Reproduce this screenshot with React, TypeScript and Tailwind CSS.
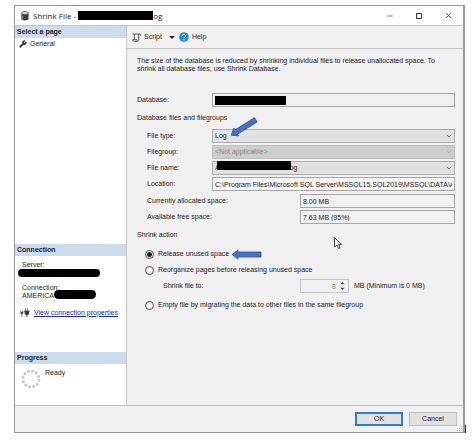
import { useState, type ReactNode } from "react";
import { ChevronDown, Minus, Wrench, X } from "lucide-react";
import clsx from "clsx";

function DatabaseIcon() {
    return (
        <svg viewBox="0 0 18 22" className="h-[10px] w-[8px] shrink-0">
            <path d="M1 4v14c0 4 16 4 16 0V4z" fill="#3a3a3a" />
            <ellipse cx="9" cy="4.5" rx="8" ry="3.5" fill="#d8d8d8" stroke="#3a3a3a" strokeWidth="1.5" />
            <path d="M4 10v8" stroke="#8a8a8a" strokeWidth="2" />
        </svg>
    );
}

function ScriptIcon() {
    return (
        <svg viewBox="0 0 27 27" fill="none" stroke="#333" strokeWidth="2.4" className="h-[9px] w-[9px] shrink-0">
            <path d="M2 3h23v5M7 3v17M20 3v16c0 6-6 6-6 0M14 20H2c0 4 2 5 5 5h10" />
        </svg>
    );
}

function HelpIcon() {
    return (
        <svg viewBox="0 0 28 28" fill="none" className="h-[10px] w-[10px] shrink-0">
            <circle cx="14" cy="14" r="13.5" fill="#1b8fdc" />
            <path d="M9.5 11c0-6 9-6 9 0 0 3-4.5 3-4.5 6.5" stroke="#fff" strokeWidth="2.8" />
            <circle cx="14" cy="21.5" r="1.9" fill="#fff" />
        </svg>
    );
}

function PlugIcon() {
    return (
        <svg viewBox="0 0 28 26" fill="#333" className="h-[9px] w-[10px] shrink-0">
            <path d="M1 8h2v4h4V8h2v6c0 2-1 3-3 4v7H4v-7c-2-1-3-2-3-4z" />
            <path d="M11 8h3V1h2v7h5V1h2v7h4v2h-1v5c0 3-2 4-5 5v5h-3v-5c-3-1-5-2-5-5v-5h-2z" />
        </svg>
    );
}

function ProgressRing() {
    return (
        <svg viewBox="0 0 20 20" fill="none" className="h-5 w-5 shrink-0">
            <circle cx="10" cy="10" r="8" stroke="#c4c4c4" strokeWidth="2.6" strokeDasharray="2.6 1.589" />
        </svg>
    );
}

function BlueArrow({ className }: { className: string }) {
    return (
        <svg viewBox="0 0 31 11" className={clsx("pointer-events-none absolute h-[11px] w-[31px]", className)}>
            <path d="M1 5.5 7 1v2h23v5H7v2z" fill="#4472c4" stroke="#2f528f" strokeWidth="0.8" />
        </svg>
    );
}

function Redaction({ className }: { className: string }) {
    return <span aria-hidden="true" className={clsx("bg-black", className)} />;
}

function SectionHeader({ children }: { children: ReactNode }) {
    return <h2 className="h-3 bg-[#cddcec] pl-[2px] text-[7px] leading-3 font-bold">{children}</h2>;
}

interface SelectRowProps {
    id: string;
    label: string;
    value: string;
    disabled?: boolean;
    children?: ReactNode;
}

function SelectRow({ id, label, value, disabled, children }: SelectRowProps) {
    return (
        <div className="flex items-center">
            <label htmlFor={id} className="w-[65px] shrink-0">{label}</label>
            <div className="relative min-w-0 flex-1">
                <select
                    id={id}
                    disabled={disabled}
                    className={clsx(
                        "block h-[14px] w-full appearance-none border pl-[2px] opacity-100",
                        disabled
                            ? "border-[#bfbfbf] bg-[#cccccc] text-[#8a8a8a]"
                            : "border-[#adadad] bg-[#e1e1e1]"
                    )}
                >
                    <option>{value}</option>
                </select>
                <ChevronDown
                    className={clsx(
                        "pointer-events-none absolute top-[3px] right-[2px] h-2 w-2",
                        disabled ? "text-[#a8a8a8]" : "text-[#444]"
                    )}
                />
                {children}
            </div>
        </div>
    );
}

function ReadOnlyRow({ id, label, value }: { id: string; label: string; value: string }) {
    return (
        <div className="flex items-center">
            <label htmlFor={id} className="w-[153px] shrink-0">{label}</label>
            <input id={id} readOnly value={value} className="h-[14px] min-w-0 flex-1 border border-[#a5a5a5] px-[2px]" />
        </div>
    );
}

interface ActionRadioProps {
    value: string;
    label: string;
    selected: string;
    onSelect: (value: string) => void;
}

function ActionRadio({ value, label, selected, onSelect }: ActionRadioProps) {
    return (
        <label className="flex h-4 items-center gap-1">
            <input
                type="radio"
                name="shrink-action"
                value={value}
                checked={selected === value}
                onChange={() => onSelect(value)}
                className="grid h-[9px] w-[9px] appearance-none place-items-center rounded-full border border-[#444] bg-white before:h-[5px] before:w-[5px] before:rounded-full checked:before:bg-[#222]"
            />
            {label}
        </label>
    );
}

export default function App() {
    const [action, setAction] = useState("release");

    return (
        <div className="flex min-h-screen bg-white pt-[5px] pr-[10px] pb-[7px] pl-[14px] font-['Liberation_Sans',Arial,sans-serif] text-[7px] leading-2 text-[#222]">
            <div className="flex min-w-0 flex-1 flex-col border border-r-2 border-[#999] bg-[#f0f0f0]">
                {/* Title bar */}
                <header className="flex h-5 items-center border-b border-[#c4c4c4] bg-white pl-[6px]">
                    <DatabaseIcon />
                    <h1 className="ml-1 flex items-center font-['Open_Sans',sans-serif] text-[8px] whitespace-pre">
                        Shrink File - <Redaction className="h-[9px] w-[75px]" />og
                    </h1>
                    <div className="ml-auto flex gap-[21px] pr-[10px] text-[#333]">
                        <button aria-label="Minimize"><Minus className="h-2 w-2" /></button>
                        <button aria-label="Maximize">
                            <svg viewBox="0 0 8 8" fill="none" stroke="currentColor" className="h-2 w-2">
                                <path d="M1.5 1.5h5v5h-5z" />
                            </svg>
                        </button>
                        <button aria-label="Close"><X className="h-[9px] w-[9px]" /></button>
                    </div>
                </header>

                <div className="flex flex-1 border-b border-[#bdbdbd]">
                    {/* Sidebar */}
                    <aside className="flex w-28 shrink-0 flex-col border-r border-[#c4c4c4] bg-white">
                        <SectionHeader>Select a page</SectionHeader>
                        <button className="flex items-center gap-[3px] pt-[2px] pl-1 text-left">
                            <Wrench className="h-2 w-2 fill-[#333] text-[#333]" />
                            General
                        </button>
                        <section className="mt-auto h-[108px]">
                            <SectionHeader>Connection</SectionHeader>
                            <div className="pt-[5px] pl-[7px]">
                                <p>Server:</p>
                                <Redaction className="-ml-1 block h-2 w-[82px] rounded-full" />
                                <p className="mt-[7px]">Connection:</p>
                                <p className="flex">
                                    AMERICA
                                    <Redaction className="-mt-[2px] h-[9px] w-[42px] rounded-full" />
                                </p>
                                <a href="#properties" className="mt-2 -ml-[2px] flex items-center gap-1 text-[#2424c8]">
                                    <PlugIcon />
                                    <span className="underline">View connection properties</span>
                                </a>
                            </div>
                        </section>
                        <section className="h-[53px]">
                            <SectionHeader>Progress</SectionHeader>
                            <div className="flex gap-1 pt-[5px] pl-[6px]">
                                <ProgressRing />
                                <p>Ready</p>
                            </div>
                        </section>
                    </aside>

                    {/* Page content */}
                    <main className="min-w-0 flex-1">
                        <div className="flex h-[23px] items-center border-b border-[#c4c4c4] pl-[5px]">
                            <button className="flex items-center gap-[3px]">
                                <ScriptIcon />
                                Script
                                <svg viewBox="0 0 6 3" className="ml-1 h-[3px] w-[6px]"><path d="M0 0h6L3 3z" fill="#222" /></svg>
                            </button>
                            <button className="ml-1 flex items-center gap-[3px]">
                                <HelpIcon />
                                Help
                            </button>
                        </div>

                        <div className="pt-2 pr-2 pl-[10px]">
                            <p>
                                The size of the database is reduced by shrinking individual files to release unallocated space. To
                                shrink all database files, use Shrink Database.
                            </p>

                            <div className="mt-5 flex items-center">
                                <label htmlFor="database" className="w-[75px] shrink-0">Database:</label>
                                <div className="relative flex-1">
                                    <input id="database" readOnly className="block h-[14px] w-full border border-[#a5a5a5]" />
                                    <Redaction className="absolute top-[3px] left-[3px] h-[9px] w-[71px]" />
                                </div>
                            </div>

                            <h3 className="mt-[7px]">Database files and filegroups</h3>
                            <div className="mt-[7px] flex flex-col gap-[2px] pl-[10px]">
                                <SelectRow id="file-type" label="File type:" value="Log">
                                    <BlueArrow className="-top-[7px] left-4 -rotate-[32deg]" />
                                </SelectRow>
                                <SelectRow id="filegroup" label="Filegroup:" value="<Not applicable>" disabled />
                                <SelectRow id="file-name" label="File name:" value={"A" + "\u00a0".repeat(36) + "og"}>
                                    <Redaction className="absolute top-0 left-[5px] h-[9px] w-[74px]" />
                                </SelectRow>
                                <div className="flex items-center">
                                    <label htmlFor="location" className="w-[65px] shrink-0">Location:</label>
                                    <input
                                        id="location"
                                        readOnly
                                        value="C:\Program Files\Microsoft SQL Server\MSSQL15.SQL2019\MSSQL\DATA\A"
                                        className="h-[14px] min-w-0 flex-1 border border-[#a5a5a5] bg-[#f5f5f5] px-[2px]"
                                    />
                                </div>
                            </div>
                            <div className="mt-[3px] flex flex-col gap-[2px] pl-[10px]">
                                <ReadOnlyRow id="allocated" label="Currently allocated space:" value="8.00 MB" />
                                <ReadOnlyRow id="free" label="Available free space:" value="7.63 MB (95%)" />
                            </div>

                            <fieldset className="relative mt-[7px]">
                                <legend>Shrink action</legend>
                                <div className="mt-[7px] flex flex-col pl-2">
                                    <div className="relative">
                                        <ActionRadio value="release" label="Release unused space" selected={action} onSelect={setAction} />
                                        <BlueArrow className="top-[3px] left-[86px]" />
                                    </div>
                                    <ActionRadio
                                        value="reorganize"
                                        label="Reorganize pages before releasing unused space"
                                        selected={action}
                                        onSelect={setAction}
                                    />
                                    <div className="flex h-4 items-center pl-[18px]">
                                        <label htmlFor="shrink-to" className="w-[137px]">Shrink file to:</label>
                                        <div className="relative">
                                            <input
                                                id="shrink-to"
                                                disabled
                                                value="8"
                                                className="block h-[14px] w-[49px] border border-[#c4c4c4] pr-3 text-right text-[#888]"
                                            />
                                            <svg viewBox="0 0 12 24" className="absolute top-[2px] right-1 h-[10px] w-[5px]" fill="#555">
                                                <path d="M1 8l5-6 5 6zM1 16l5 6 5-6z" />
                                            </svg>
                                        </div>
                                        <span className="ml-[5px]">MB (Minimum is 0 MB)</span>
                                    </div>
                                    <div className="mt-[3px]">
                                        <ActionRadio
                                            value="empty"
                                            label="Empty file by migrating the data to other files in the same filegroup"
                                            selected={action}
                                            onSelect={setAction}
                                        />
                                    </div>
                                </div>
                                {/* Mouse pointer */}
                                <svg viewBox="0 0 16 24" className="absolute top-[6px] left-[197px] -mt-2 h-3 w-2">
                                    <path d="M1 1v19l5-4 3 7 3-1-3-7h6z" fill="#fff" stroke="#333" strokeWidth="1.8" />
                                </svg>
                            </fieldset>
                        </div>
                    </main>
                </div>

                {/* Dialog buttons */}
                <footer className="relative flex h-[26px] items-center justify-end gap-[6px] pr-[6px]">
                    <button className="h-[14px] w-12 border-2 border-[#2f7fc4] bg-[#e1e1e1] leading-[10px]">OK</button>
                    <button className="h-[14px] w-12 border border-[#c0c0c0] bg-[#e1e1e1]">Cancel</button>
                    <svg viewBox="0 0 6 6" fill="#b5b5b5" className="absolute right-0 bottom-0 h-[6px] w-[6px]">
                        <path d="M4 0h1v1H4zM2 2h1v1H2zM4 2h1v1H4zM0 4h1v1H0zM2 4h1v1H2zM4 4h1v1H4z" />
                    </svg>
                </footer>
            </div>
            <span className="-mr-[2px] h-2 w-px self-end bg-[#333]" />
        </div>
    );
}
